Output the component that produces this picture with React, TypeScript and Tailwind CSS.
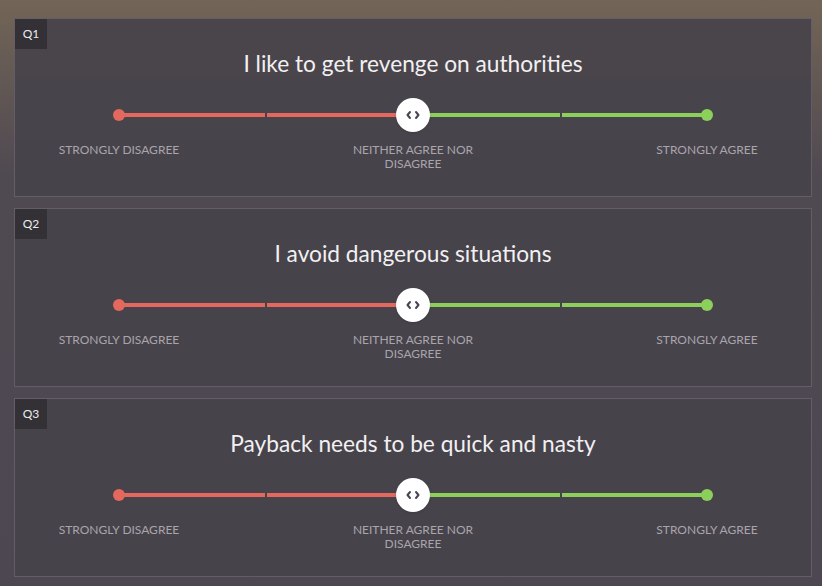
const questions = [
  { id: 'Q1', text: 'I like to get revenge on authorities' },
  { id: 'Q2', text: 'I avoid dangerous situations' },
  { id: 'Q3', text: 'Payback needs to be quick and nasty' },
];

function Handle() {
  return (
    <div className="absolute left-1/2 top-1/2 -translate-x-1/2 -translate-y-1/2 w-[34px] h-[34px] rounded-full bg-white flex items-center justify-center shadow-sm">
      <svg width="14" height="10" viewBox="0 0 14 10" fill="none" stroke="#4a4650" strokeWidth="2" strokeLinecap="round" strokeLinejoin="round">
        <path d="M4 2 1.5 5 4 8" />
        <path d="M10 2 12.5 5 10 8" />
      </svg>
    </div>
  );
}

function Slider() {
  return (
    <div className="relative w-[588px] h-[12px] flex items-center">
      <div className="flex w-full h-[4px] gap-[2px]">
        <div className="flex-1 bg-[#e4685e]" />
        <div className="flex-1 bg-[#e4685e]" />
        <div className="flex-1 bg-[#8ccf5a]" />
        <div className="flex-1 bg-[#8ccf5a]" />
      </div>
      <div className="absolute -left-[6px] top-0 w-[12px] h-[12px] rounded-full bg-[#e4685e]" />
      <div className="absolute -right-[6px] top-0 w-[12px] h-[12px] rounded-full bg-[#8ccf5a]" />
      <Handle />
    </div>
  );
}

function QuestionCard({ id, text }: { id: string; text: string }) {
  return (
    <div className="relative h-[179px] border border-[#635d67] bg-[#46424a]/90 flex flex-col items-center pt-[30px]">
      <div className="absolute left-0 top-0 w-[32px] h-[30px] bg-[#333136] flex items-center justify-center text-[12px] font-normal text-[#ecebee]">
        {id}
      </div>
      <h2 className="text-[22.7px] leading-[30px] text-[#f2f0f2]">{text}</h2>
      <div className="mt-[30px]">
        <Slider />
      </div>
      <div className="mt-[22px] w-[738px] flex justify-between text-[12px] leading-[14px] uppercase text-[#aaa5ab]">
        <div className="w-[150px] text-center">Strongly disagree</div>
        <div className="w-[150px] text-center px-[8px]">Neither agree nor disagree</div>
        <div className="w-[150px] text-center">Strongly agree</div>
      </div>
    </div>
  );
}

export default function App() {
  return (
    <div
      className="w-[822px] h-[586px] overflow-hidden bg-gradient-to-b from-[#736556] via-[#4f4951] via-30% to-[#4c4751] pt-[18px] pl-[14px]"
      style={{ fontFamily: 'Lato, "Open Sans", sans-serif' }}
    >
      <div className="w-[798px] flex flex-col gap-[11px]">
        {questions.map((q) => (
          <QuestionCard key={q.id} {...q} />
        ))}
      </div>
    </div>
  );
}
